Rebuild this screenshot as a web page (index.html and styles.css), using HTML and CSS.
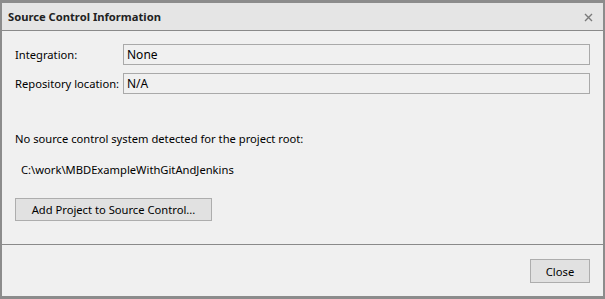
FILE: index.html
```html
<!DOCTYPE html>
<html lang="en">
<head>
  <meta charset="UTF-8">
  <title>Source Control Information</title>
  <link rel="stylesheet" href="styles.css">
</head>
<body>
  <div class="dialog">
    <div class="titlebar">
      <span class="title">Source Control Information</span>
      <svg class="close-x" width="9" height="9" viewBox="0 0 9 9">
        <path d="M1 1 L8 8 M8 1 L1 8" stroke="#7a7a7a" stroke-width="1.4"/>
      </svg>
    </div>

    <div class="content">
      <div class="row">
        <label class="lbl">Integration:</label>
        <div class="field">None</div>
      </div>
      <div class="row">
        <label class="lbl">Repository location:</label>
        <div class="field">N/A</div>
      </div>

      <p class="msg">No source control system detected for the project root:</p>
      <p class="path">C:\work\MBDExampleWithGitAndJenkins</p>

      <button class="btn add">Add Project to Source Control...</button>
    </div>

    <div class="footer">
      <button class="btn close">Close</button>
    </div>
  </div>
</body>
</html>
```

FILE: styles.css
```css
html, body {
  margin: 0;
  padding: 0;
}
body {
  font-family: "Noto Sans", "Open Sans", sans-serif;
  font-size: 11.2px;
  color: #000;
  background: #f0f0f0;
}
.dialog {
  width: 605px;
  height: 299px;
  box-sizing: border-box;
  border: 2px solid #8c8c8c;
  border-top-width: 3px;
  border-bottom-width: 3px;
  background: #f0f0f0;
  display: flex;
  flex-direction: column;
}
.titlebar {
  height: 27px;
  background: #e5e5e5;
  border-bottom: 1px solid #8a8a8a;
  display: flex;
  align-items: center;
  justify-content: space-between;
  padding: 0 10px 0 6px;
}
.title {
  font-weight: bold;
  color: #222;
}
.close-x {
  margin-top: 1px;
}
.content {
  flex: 1;
  padding: 13px 13px 0 13px;
  border-bottom: 1px solid #8a8a8a;
}
.row {
  display: flex;
  align-items: center;
  margin-bottom: 8px;
}
.lbl {
  width: 108px;
  white-space: nowrap;
}
.field {
  flex: 1;
  height: 19px;
  line-height: 19px;
  border: 1px solid #a9a9a9;
  background: #f0f0f0;
  padding-left: 3px;
  font-size: 12px;
}
.msg {
  margin: 36px 0 0 0;
  line-height: 17px;
}
.path {
  margin: 14px 0 0 6px;
  line-height: 17px;
}
.btn {
  font-family: inherit;
  font-size: 11.2px;
  background: #e1e1e1;
  border: 1px solid #adadad;
  color: #000;
  padding: 0;
}
.add {
  margin-top: 20px;
  width: 197px;
  height: 23px;
}
.footer {
  height: 51px;
  display: flex;
  justify-content: flex-end;
  align-items: flex-start;
  padding: 14px 13px 0 0;
  box-sizing: border-box;
}
.close {
  width: 60px;
  height: 24px;
}
```
